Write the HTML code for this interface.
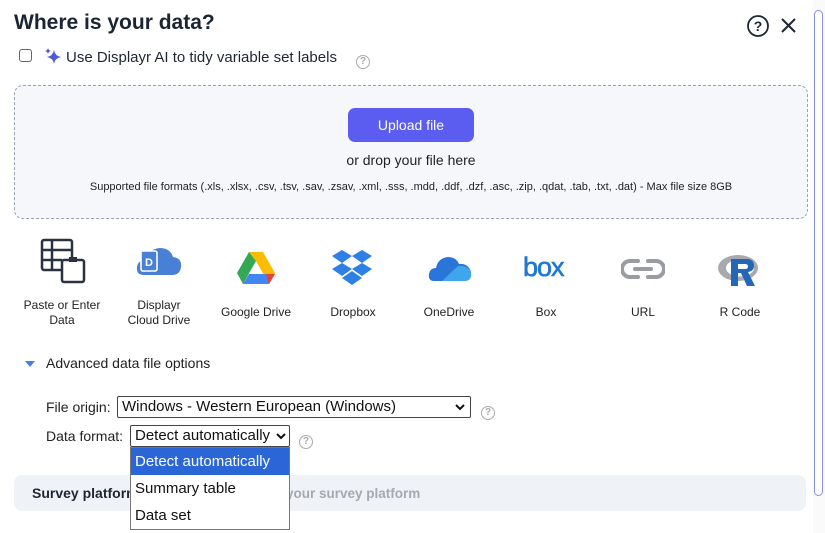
<!DOCTYPE html>
<html><head><meta charset="utf-8"><style>
*{box-sizing:border-box}
body{margin:0;width:825px;height:533px;overflow:hidden;background:#fff;font-family:"Liberation Sans",sans-serif;color:#1f2633;position:relative}
.a{position:absolute}
.lbl{position:absolute;width:96px;text-align:center;font-size:12px;color:#222;line-height:15px}
.q{display:inline-block;width:14px;height:14px;border:1.3px solid #aaa;border-radius:50%;font-size:10px;color:#aaa;text-align:center;line-height:12px;font-weight:bold}
.sel{position:absolute;border:1px solid #444;border-radius:2px;background:#fff;font-size:15px;color:#111;padding-left:4px;line-height:20px}
.chev{position:absolute;right:5px;top:7px}
</style></head><body>
<div class="a" style="left:14px;top:11px;font-size:21px;font-weight:bold;color:#1b2433">Where is your data?</div>
<div class="a" style="left:19px;top:49px;width:13px;height:13px;border:1.5px solid #666;border-radius:3px"></div>
<svg class="a" style="left:44px;top:47px" width="20" height="20" viewBox="0 0 20 20"><path d="M10 3 Q11 9 17 10 Q11 11 10 17 Q9 11 3 10 Q9 9 10 3Z" fill="#4f5bd5"/><path d="M4 1 Q4.5 3.5 7 4 Q4.5 4.5 4 7 Q3.5 4.5 1 4 Q3.5 3.5 4 1Z" fill="#4f5bd5"/></svg>
<div class="a" style="left:66px;top:49px;font-size:15px;color:#1f2633">Use Displayr AI to tidy variable set labels</div>
<div class="a" style="left:356px;top:51px"><span class="q">?</span></div>
<svg class="a" style="left:746px;top:14px" width="24" height="24" viewBox="0 0 24 24"><circle cx="12" cy="12" r="10" fill="none" stroke="#1f2633" stroke-width="1.8"/><text x="12" y="17" text-anchor="middle" font-size="14" font-family="Liberation Sans" font-weight="bold" fill="#1f2633">?</text></svg>
<svg class="a" style="left:780px;top:17px" width="17" height="17" viewBox="0 0 17 17"><path d="M2 2L15 15M15 2L2 15" stroke="#1f2633" stroke-width="2"/></svg>
<div class="a" style="left:813px;top:0;width:12px;height:533px;background:#fafafa"></div>
<div class="a" style="left:814px;top:10px;width:9px;height:486px;border:1.5px solid #8a8ee6;border-radius:5px;background:#fff"></div>
<div class="a" style="left:14px;top:85px;width:794px;height:134px;border:1.3px dashed #9aa3b5;border-radius:9px;background:#f6f7fb"></div>
<div class="a" style="left:348px;top:108px;width:126px;height:34px;background:#5b5cf0;border-radius:7px;color:#fff;font-size:14px;text-align:center;line-height:34px">Upload file</div>
<div class="a" style="left:0;top:152px;width:822px;text-align:center;font-size:14px;color:#222">or drop your file here</div>
<div class="a" style="left:0;top:181px;width:822px;text-align:center;font-size:11px;color:#222">Supported file formats (.xls, .xlsx, .csv, .tsv, .sav, .zsav, .xml, .sss, .mdd, .ddf, .dzf, .asc, .zip, .qdat, .tab, .txt, .dat) - Max file size 8GB</div>
<svg class="a" style="left:40px;top:238px" width="46" height="46" viewBox="0 0 46 46"><g fill="none" stroke="#2a3140" stroke-width="2.5"><rect x="2" y="2" width="30" height="30" rx="2"/><path d="M2 12H32M2 22H22M12 2V32"/><rect x="22" y="22" width="22" height="22" rx="2" fill="#fff"/></g><rect x="29" y="19" width="8" height="5" fill="#2a3140"/></svg>
<svg class="a" style="left:136px;top:245px" width="46" height="32" viewBox="0 0 46 32"><path d="M8 30 Q0 30 1 22 Q2 15 10 15 Q12 4 24 3 Q34 3 37 12 Q46 13 45 22 Q44 30 36 30Z" fill="#4a7fd6"/><rect x="5" y="6" width="16" height="20" rx="2" fill="#4a7fd6" stroke="#fff" stroke-width="1.6"/><text x="13" y="21" text-anchor="middle" font-size="11" font-family="Liberation Sans" font-weight="bold" fill="#fff">D</text></svg>
<svg class="a" style="left:236px;top:251px" width="40" height="36" viewBox="0 0 40 36"><path d="M13 1H27L39 22L33 33L20 10Z" fill="#fbbc04"/><path d="M13 1L20 10L7 33L1 22Z" fill="#34a853"/><path d="M7 33L13 23H39L33 33Z" fill="#4285f4"/><path d="M33 33L39 23H30Z" fill="#ea4335"/></svg>
<svg class="a" style="left:332px;top:249px" width="40" height="38" viewBox="0 0 40 38"><g fill="#2f80e6"><path d="M10 1L20 7L10 14L0 7Z"/><path d="M30 1L40 7L30 14L20 7Z"/><path d="M0 20L10 14L20 20L10 27Z"/><path d="M40 20L30 14L20 20L30 27Z"/><path d="M10 29L20 22L30 29L20 36Z"/></g></svg>
<svg class="a" style="left:428px;top:254px" width="44" height="28" viewBox="0 0 44 28"><path d="M6 27Q0 27 1 20Q2 14 8 14Q10 4 20 3Q28 3 31 10Q40 9 43 18Q44 27 36 27Z" fill="#2a76d8"/><path d="M14 27L30 12Q40 11 43 19Q44 27 36 27Z" fill="#3fa6ec"/></svg>
<div class="a" style="left:523px;top:252px;font-size:27px;color:#1f78d1;letter-spacing:-1px;-webkit-text-stroke:0.6px #1f78d1">box</div>
<svg class="a" style="left:621px;top:258px" width="44" height="22" viewBox="0 0 44 22"><g fill="none" stroke="#999ca3" stroke-width="4" stroke-linecap="round"><path d="M17 3H9A8 8 0 0 0 9 19H17M27 3H35A8 8 0 0 1 35 19H27M14 11H30"/></g></svg>
<svg class="a" style="left:717px;top:253px" width="44" height="34" viewBox="0 0 44 34"><ellipse cx="21" cy="15" rx="20" ry="13" fill="#a8aaaf"/><ellipse cx="23" cy="15" rx="14" ry="8.5" fill="#fff"/><path d="M14 6H30Q37 6 37 13Q37 18 31 19L38 33H30L24 20H21V33H14Z" fill="#2467b7"/><path d="M21 11H28Q31 11 31 13.5Q31 16 28 16H21Z" fill="#fff"/></svg>
<div class="lbl" style="left:14px;top:298px">Paste or Enter<br>Data</div>
<div class="lbl" style="left:111px;top:298px">Displayr<br>Cloud Drive</div>
<div class="lbl" style="left:208px;top:305px">Google Drive</div>
<div class="lbl" style="left:305px;top:305px">Dropbox</div>
<div class="lbl" style="left:401px;top:305px">OneDrive</div>
<div class="lbl" style="left:498px;top:305px">Box</div>
<div class="lbl" style="left:595px;top:305px">URL</div>
<div class="lbl" style="left:692px;top:305px">R Code</div>
<svg class="a" style="left:25px;top:361px" width="10" height="6"><path d="M0 0H10L5 6Z" fill="#4a7fe0"/></svg>
<div class="a" style="left:46px;top:355px;font-size:14px;color:#222">Advanced data file options</div>
<div class="a" style="left:46px;top:399px;font-size:14px;color:#222">File origin:</div>
<div class="sel" style="left:117px;top:396px;width:354px;height:22px">Windows - Western European (Windows)<svg class="chev" width="10" height="7"><path d="M1 1L5 5L9 1" fill="none" stroke="#111" stroke-width="2"/></svg></div>
<div class="a" style="left:481px;top:402px"><span class="q">?</span></div>
<div class="a" style="left:46px;top:428px;font-size:14px;color:#222">Data format:</div>
<div class="sel" style="left:130px;top:425px;width:160px;height:22px">Detect automatically<svg class="chev" style="right:3px" width="10" height="7"><path d="M1 1L5 5L9 1" fill="none" stroke="#111" stroke-width="2"/></svg></div>
<div class="a" style="left:299px;top:431px"><span class="q">?</span></div>
<div class="a" style="left:14px;top:475px;width:792px;height:36px;background:#eff2f7;border-radius:8px"></div>
<div class="a" style="left:32px;top:485px;font-size:14px;font-weight:bold;color:#1f2633">Survey platform</div>
<div class="a" style="left:286px;top:486px;font-size:13.5px;font-weight:bold;color:#a4a9b3">your survey platform</div>
<div class="a" style="left:130px;top:447px;width:160px;height:83px;border:1px solid #777;background:#fff;font-size:15px;color:#111">
<div style="background:#2a66d6;color:#fff;height:27px;line-height:27px;padding-left:4px">Detect automatically</div>
<div style="height:27px;line-height:27px;padding-left:4px">Summary table</div>
<div style="height:27px;line-height:27px;padding-left:4px">Data set</div>
</div>
</body></html>
